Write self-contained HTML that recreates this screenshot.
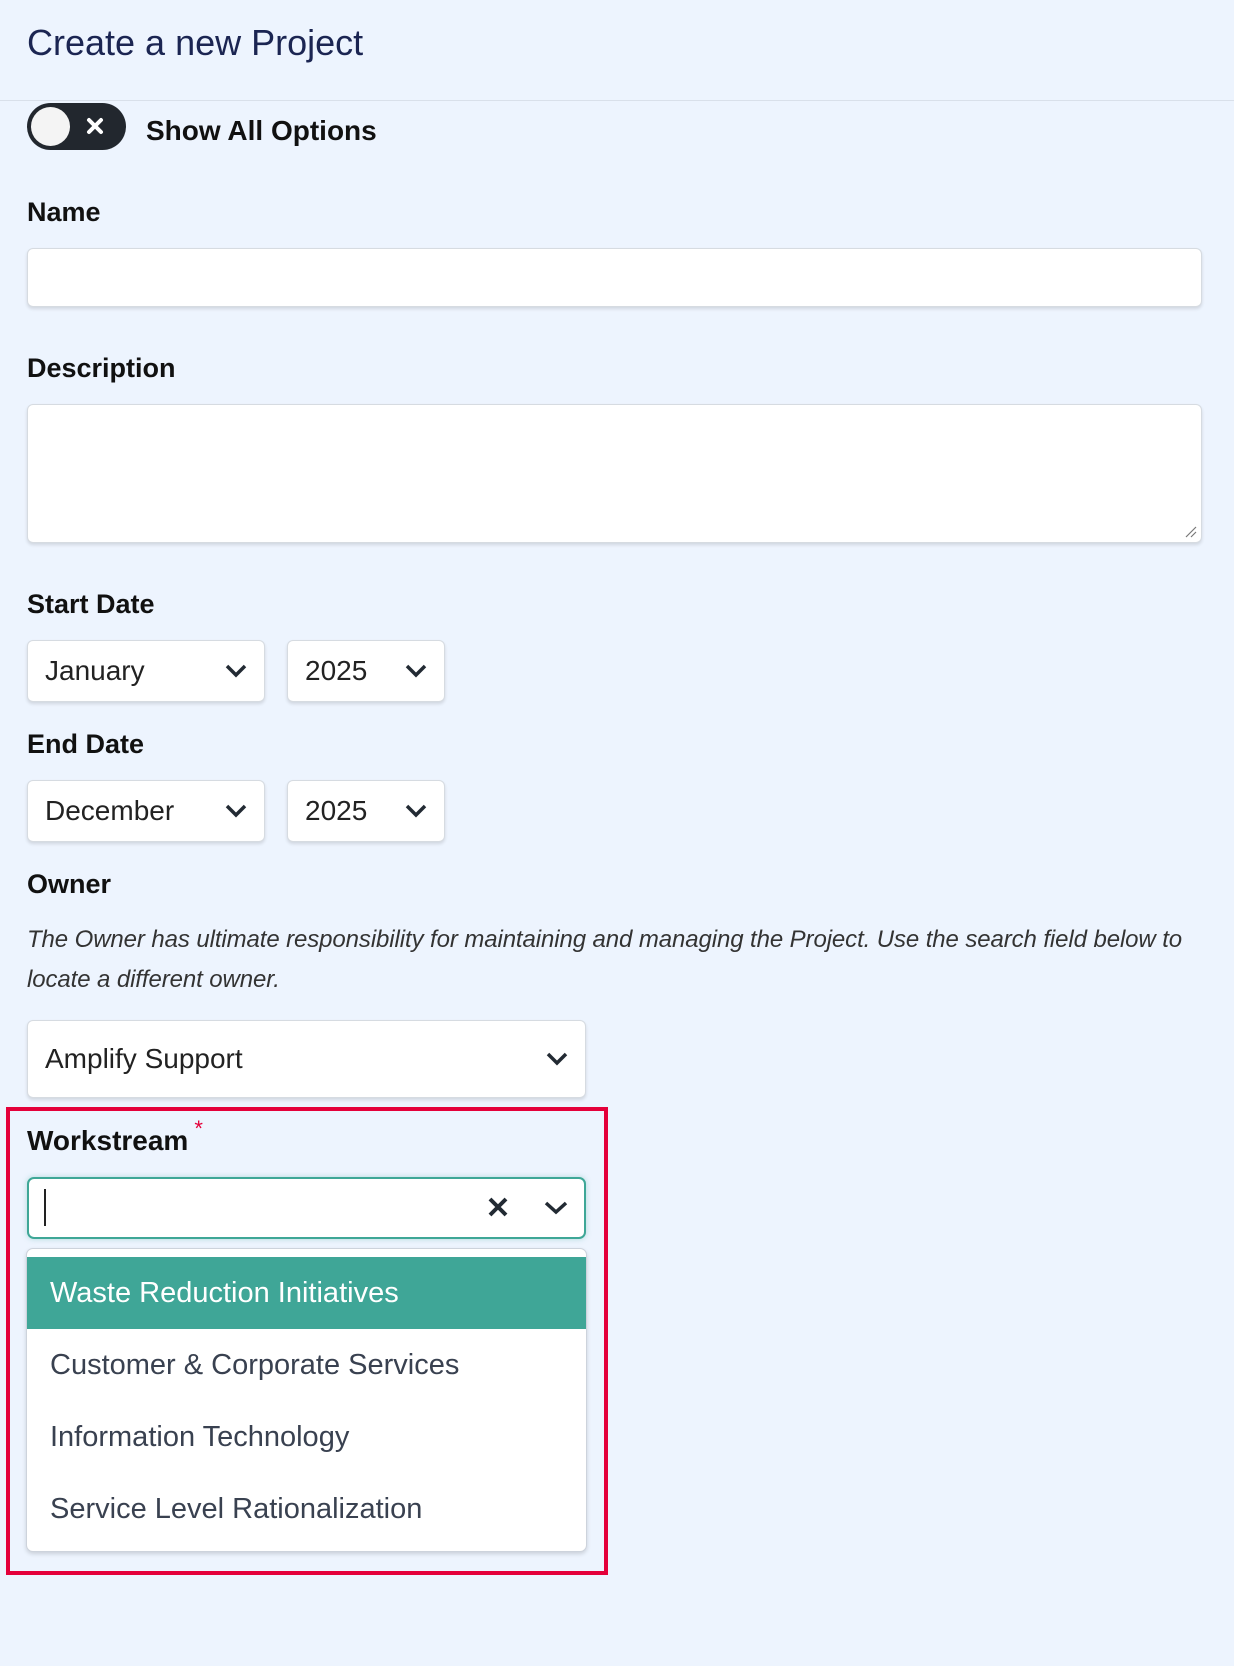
<!DOCTYPE html>
<html><head><meta charset="utf-8"><style>
*{box-sizing:border-box;margin:0;padding:0}
body{width:1234px;height:1666px;background:#edf4fe;font-family:"Liberation Sans",sans-serif;position:relative;overflow:hidden;color:#111}
.a{position:absolute}
.lbl{position:absolute;left:27px;font-weight:bold;font-size:27px;color:#111}
.box{position:absolute;background:#fff;border:1px solid #d6dbe1;border-radius:6px;box-shadow:0 2px 3px rgba(0,0,0,0.12)}
.sel{font-size:28px;color:#222;padding-left:17px;display:flex;align-items:center}
.chev{position:absolute;top:50%;margin-top:-7px}
.opt{position:absolute;left:0;right:0;height:72px;font-size:29px;color:#394150;padding-left:23px;display:flex;align-items:center}
</style></head><body>
<div class="a" style="left:27px;top:22px;font-size:36px;color:#1b2552">Create a new Project</div>
<div class="a" style="left:0;top:100px;width:1234px;height:1px;background:#d9e0ea"></div>
<div class="a" style="left:27px;top:103px;width:99px;height:47px;border-radius:24px;background:#22272e"></div>
<div class="a" style="left:31px;top:107px;width:39px;height:39px;border-radius:50%;background:#f4f4f4"></div>
<svg class="a" style="left:86px;top:117px" width="18" height="18" viewBox="0 0 18 18"><path d="M3 3L15 15M15 3L3 15" stroke="#fff" stroke-width="4" stroke-linecap="round"/></svg>
<div class="a" style="left:146px;top:115px;font-size:28px;font-weight:bold">Show All Options</div>
<div class="lbl" style="top:197px">Name</div>
<div class="box" style="left:27px;top:248px;width:1175px;height:59px"></div>
<div class="lbl" style="top:353px">Description</div>
<div class="box" style="left:27px;top:404px;width:1175px;height:139px"></div>
<svg class="a" style="left:1185px;top:526px" width="12" height="12"><path d="M1 11L11 1M6 11L11 6" stroke="#777" stroke-width="1.2"/></svg>
<div class="lbl" style="top:589px">Start Date</div>
<div class="box sel" style="left:27px;top:640px;width:238px;height:62px">January<svg class="chev" style="right:17px" width="22" height="14"><path d="M2 2L11 11L20 2" fill="none" stroke="#222a33" stroke-width="3.5"/></svg></div>
<div class="box sel" style="left:287px;top:640px;width:158px;height:62px">2025<svg class="chev" style="right:17px" width="22" height="14"><path d="M2 2L11 11L20 2" fill="none" stroke="#222a33" stroke-width="3.5"/></svg></div>
<div class="lbl" style="top:729px">End Date</div>
<div class="box sel" style="left:27px;top:780px;width:238px;height:62px">December<svg class="chev" style="right:17px" width="22" height="14"><path d="M2 2L11 11L20 2" fill="none" stroke="#222a33" stroke-width="3.5"/></svg></div>
<div class="box sel" style="left:287px;top:780px;width:158px;height:62px">2025<svg class="chev" style="right:17px" width="22" height="14"><path d="M2 2L11 11L20 2" fill="none" stroke="#222a33" stroke-width="3.5"/></svg></div>
<div class="lbl" style="top:869px">Owner</div>
<div class="a" style="left:27px;top:920px;font-size:24px;font-style:italic;color:#333;line-height:39.5px;width:1210px;letter-spacing:-0.1px">The Owner has ultimate responsibility for maintaining and managing the Project. Use the search field below to<br>locate a different owner.</div>
<div class="box sel" style="left:27px;top:1020px;width:559px;height:78px">Amplify Support<svg class="chev" style="right:17px" width="22" height="14"><path d="M2 2L11 11L20 2" fill="none" stroke="#222a33" stroke-width="3.5"/></svg></div>
<div class="a" style="left:6px;top:1107px;width:602px;height:468px;border:4px solid #e4003a"></div>
<div class="lbl" style="top:1125px;font-size:28px">Workstream<span style="color:#e4003a;font-weight:normal;font-size:22px;position:relative;top:-14px;margin-left:6px">*</span></div>
<div class="a" style="left:27px;top:1177px;width:559px;height:62px;background:#fff;border:2px solid #3ea797;border-radius:7px;box-shadow:0 0 6px rgba(62,167,151,0.35)"></div>
<div class="a" style="left:44px;top:1189px;width:2px;height:37px;background:#222"></div>
<svg class="a" style="left:487px;top:1196px" width="22" height="22"><path d="M3 3L19 19M19 3L3 19" stroke="#222a33" stroke-width="4"/></svg>
<svg class="a" style="left:544px;top:1201px" width="24" height="14"><path d="M2 2L12 11L22 2" fill="none" stroke="#222a33" stroke-width="3.5"/></svg>
<div class="a" style="left:26px;top:1248px;width:561px;height:304px;background:#fff;border:1px solid #cdd3dc;border-radius:7px;box-shadow:0 2px 4px rgba(0,0,0,0.15);overflow:hidden">
<div class="opt" style="top:8px;background:#3fa697;color:#fff">Waste Reduction Initiatives</div>
<div class="opt" style="top:80px">Customer &amp; Corporate Services</div>
<div class="opt" style="top:152px">Information Technology</div>
<div class="opt" style="top:224px">Service Level Rationalization</div>
</div>
</body></html>
